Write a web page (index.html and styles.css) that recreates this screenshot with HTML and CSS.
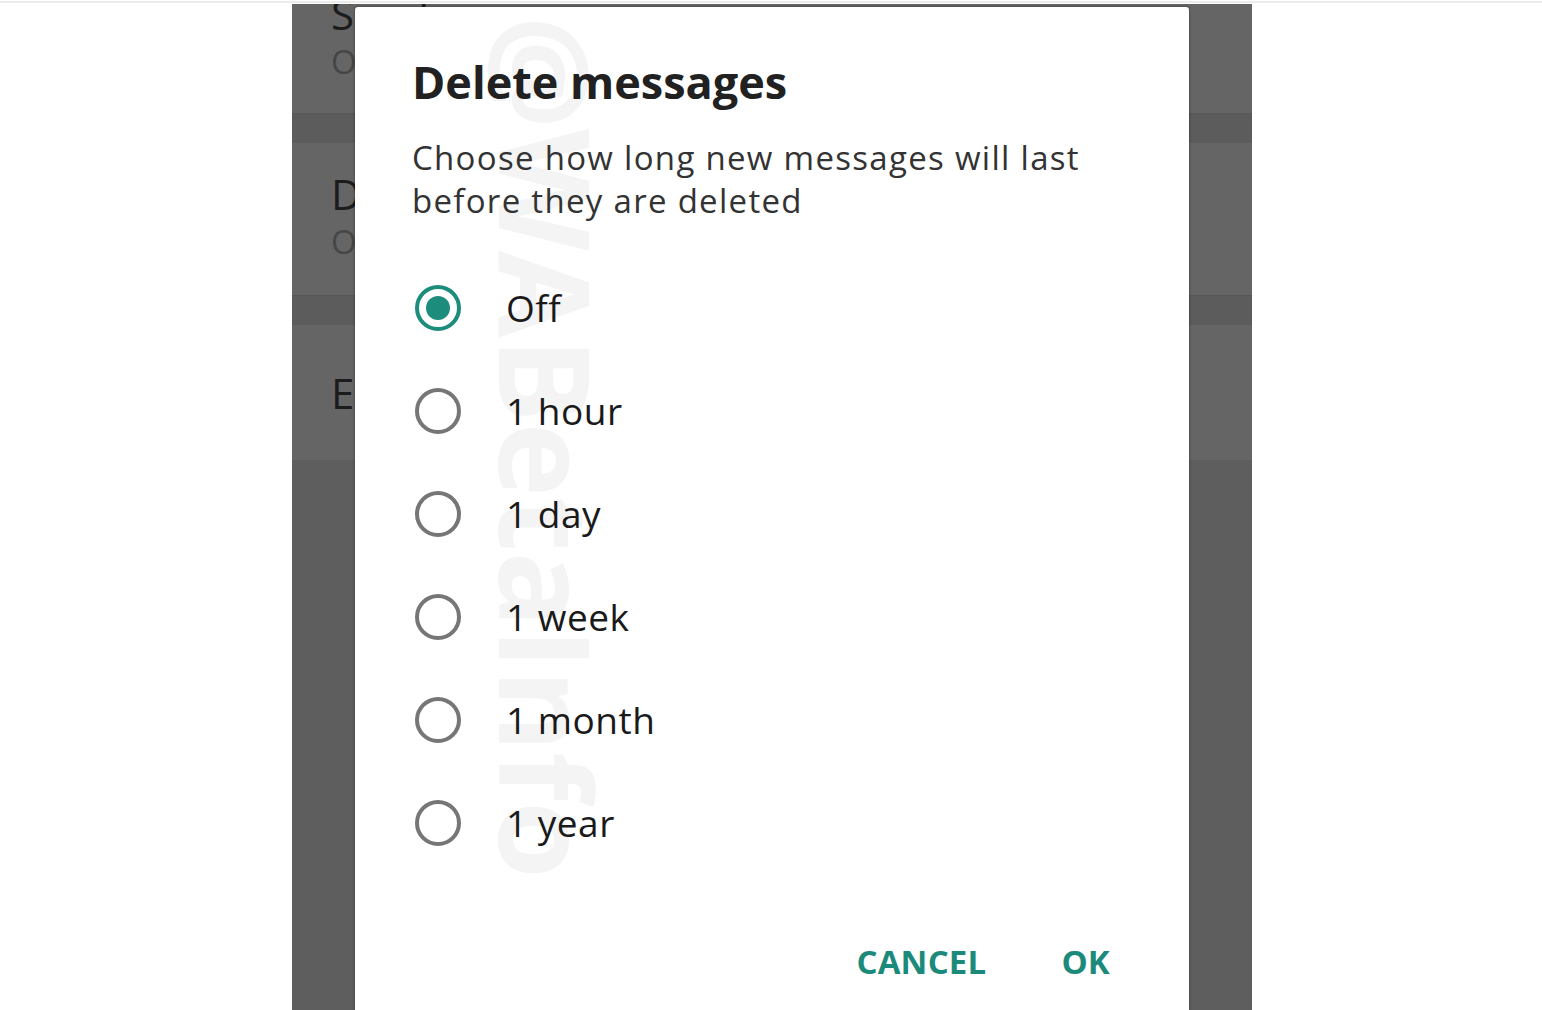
FILE: index.html
```html
<!DOCTYPE html>
<html lang="en">

<head>
    <meta charset="UTF-8">
    <meta name="viewport" content="width=device-width, initial-scale=1.0">
    <title>Delete messages</title>
    <link rel="stylesheet" href="styles.css">
</head>

<body>
    <div class="top-rule"></div>
    <div class="shot">
        <div class="settings">
            <div class="row row-first">
                <div class="row-title">Send messages</div>
                <div class="row-sub">Only admins</div>
            </div>
            <div class="band"></div>
            <div class="row row-second">
                <div class="row-title">Delete messages</div>
                <div class="row-sub">Off</div>
            </div>
            <div class="band"></div>
            <div class="row row-third">
                <div class="row-title">Edit group info</div>
            </div>
        </div>

        <div class="dialog">
            <div class="watermark">@WABetaInfo</div>
            <h1 class="dialog-title">Delete messages</h1>
            <p class="dialog-text">Choose how long new messages will last before they are deleted</p>
            <div class="options">
                <div class="option selected"><span class="radio"></span><span class="option-label">Off</span></div>
                <div class="option"><span class="radio"></span><span class="option-label">1 hour</span></div>
                <div class="option"><span class="radio"></span><span class="option-label">1 day</span></div>
                <div class="option"><span class="radio"></span><span class="option-label">1 week</span></div>
                <div class="option"><span class="radio"></span><span class="option-label">1 month</span></div>
                <div class="option"><span class="radio"></span><span class="option-label">1 year</span></div>
            </div>
            <div class="actions">
                <button class="action">CANCEL</button>
                <button class="action">OK</button>
            </div>
        </div>
    </div>
</body>

</html>
```

FILE: styles.css
```css
body {
    font-family: "Open Sans", sans-serif;
    background-color: #ffffff;
    margin: 0;
    height: 1010px;
    overflow: hidden;
}

.top-rule {
    height: 2px;
    margin: 1px 0;
    background-color: #ececec;
}

.shot {
    position: relative;
    width: 960px;
    height: 1006px;
    margin-left: 292px;
    background-color: #5e5e5e;
    overflow: hidden;
}

/* dimmed settings list behind the dialog */
.settings {
    display: flex;
    flex-direction: column;
}

.row {
    display: flex;
    flex-direction: column;
    padding-left: 39px;
    background-color: #656565;
    box-sizing: border-box;
}

.row-title {
    font-size: 42px;
    line-height: 46px;
    color: #1c1c1c;
    white-space: nowrap;
}

.row-sub {
    font-size: 33px;
    line-height: 50px;
    color: #464646;
    white-space: nowrap;
}

.row-first {
    height: 109px;
    justify-content: flex-end;
    padding-bottom: 26px;
}

.row-second {
    height: 152px;
    padding-top: 28px;
}

.row-third {
    height: 135px;
    justify-content: center;
}

.band {
    height: 30px;
    background-color: #5c5c5c;
    border-top: 1px solid #575757;
    box-sizing: border-box;
}

/* dialog */
.dialog {
    position: absolute;
    top: 3px;
    left: 63px;
    z-index: 1;
    width: 834px;
    height: 1100px;
    box-sizing: border-box;
    padding: 48px 79px 0 57px;
    background-color: #ffffff;
    border-radius: 3px;
    box-shadow: 0 0 3px rgba(0, 0, 0, 0.45);
}

.watermark {
    position: absolute;
    top: 9px;
    left: 130px;
    z-index: -1;
    writing-mode: vertical-rl;
    text-orientation: sideways;
    font-size: 126px;
    font-weight: 700;
    line-height: 1;
    color: #f4f4f4;
    white-space: nowrap;
}

.dialog-title {
    margin: 0;
    font-size: 45px;
    line-height: 54px;
    font-weight: 700;
    color: #212121;
}

.dialog-text {
    margin: 27px 0 0;
    font-size: 33px;
    line-height: 43px;
    letter-spacing: 1.3px;
    color: #333333;
}

.options {
    margin-top: 34px;
    display: flex;
    flex-direction: column;
}

.option {
    display: flex;
    align-items: center;
    height: 103px;
}

.radio {
    width: 46px;
    height: 46px;
    margin-left: 3px;
    box-sizing: border-box;
    border: 4.5px solid #767676;
    border-radius: 50%;
    display: flex;
    align-items: center;
    justify-content: center;
    flex-shrink: 0;
}

.option.selected .radio {
    border-color: #1c8c7c;
}

.option.selected .radio::after {
    content: "";
    width: 24px;
    height: 24px;
    border-radius: 50%;
    background-color: #1c8c7c;
}

.option-label {
    margin-left: 45px;
    font-size: 37px;
    line-height: 48px;
    letter-spacing: 0.5px;
    color: #1a1a1a;
}

.actions {
    margin-top: 64px;
    display: flex;
    justify-content: flex-end;
    gap: 75px;
}

.action {
    padding: 0;
    border: none;
    background: none;
    font-family: inherit;
    font-size: 33px;
    line-height: 48px;
    font-weight: 700;
    letter-spacing: 0.2px;
    color: #1c8a7a;
    cursor: pointer;
}
```
